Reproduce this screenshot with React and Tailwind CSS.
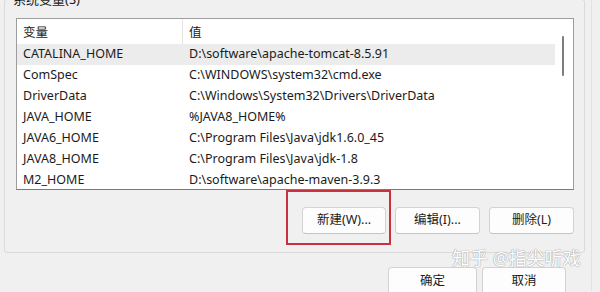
import React from "react";

const rows = [
  ["CATALINA_HOME", "D:\\software\\apache-tomcat-8.5.91", true],
  ["ComSpec", "C:\\WINDOWS\\system32\\cmd.exe"],
  ["DriverData", "C:\\Windows\\System32\\Drivers\\DriverData"],
  ["JAVA_HOME", "%JAVA8_HOME%"],
  ["JAVA6_HOME", "C:\\Program Files\\Java\\jdk1.6.0_45"],
  ["JAVA8_HOME", "C:\\Program Files\\Java\\jdk-1.8"],
  ["M2_HOME", "D:\\software\\apache-maven-3.9.3"],
];

function Btn({ children, className = "" }) {
  return (
    <div
      className={`flex items-center justify-center rounded-[4px] border border-[#d3d3d3] border-b-[#c4c4c4] bg-[#fdfdfd] text-[12.5px] text-[#1b1b1b] ${className}`}
    >
      {children}
    </div>
  );
}

export default function App() {
  return (
    <div
      className="relative h-[292px] w-[600px] overflow-hidden bg-[#f0f0f0] text-[#1b1b1b]"
      style={{ fontFamily: '"Noto Sans", "Noto Sans CJK SC", sans-serif' }}
    >
      <div className="h-[292px] w-[592px] border-r border-[#e2e2e2]">
        {/* group box */}
        <div className="relative ml-[4px] mt-[-1px] h-[254px] w-[581px] rounded-[3px] border border-[#dadada] pl-[11px] pt-[18px]">
          <div className="absolute left-[7px] top-[-9px] bg-[#f0f0f0] px-[1px] text-[13px] leading-[16px]">
            系统变量(S)
          </div>
          {/* list */}
          <div className="relative h-[172px] w-[558px] overflow-hidden border border-[#9d9d9d] border-b-[#7a7a7a] bg-white">
            <div className="flex h-[25px] items-center text-[12.5px]">
              <div className="flex h-full w-[166px] items-center border-r border-[#e5e5e5] pl-[6px] pt-[4px]">变量</div>
              <div className="pl-[6px] pt-[4px]">值</div>
            </div>
            {rows.map(([k, v, sel]) => (
              <div
                key={k}
                className={`flex h-[21px] w-[538px] items-center text-[12.5px] ${sel ? "bg-[#ececec]" : ""}`}
              >
                <div className="w-[166px] pl-[6px]">{k}</div>
                <div className="pl-[6px]">{v}</div>
              </div>
            ))}
            <div className="absolute left-[545px] top-[17px] h-[40px] w-[2px] rounded-full bg-[#7d7d7d]" />
          </div>
          {/* buttons */}
          <div className="mt-[17px] flex w-[558px] justify-end gap-[9px]">
            <Btn className="h-[27px] w-[84px]">新建(W)...</Btn>
            <Btn className="h-[27px] w-[85px]">编辑(I)...</Btn>
            <Btn className="h-[27px] w-[85px]">删除(L)</Btn>
          </div>
          {/* red highlight */}
          <div className="absolute left-[281px] top-[190px] h-[55px] w-[105px] border-2 border-[#c8323e]" />
        </div>
        {/* bottom buttons */}
        <div className="mt-[14px] flex justify-end gap-[5px] pr-[25px]">
          <Btn className="h-[28px] w-[89px] border-[#c9c9c9]">确定</Btn>
          <Btn className="h-[28px] w-[84px]">取消</Btn>
        </div>
      </div>
      {/* watermark */}
      <div className="absolute left-[452px] top-[247px] text-[18px] leading-[22px] text-white [text-shadow:0_0_1px_#999,0_0_1px_#999]">
        知乎 @指尖听戏
      </div>
    </div>
  );
}
